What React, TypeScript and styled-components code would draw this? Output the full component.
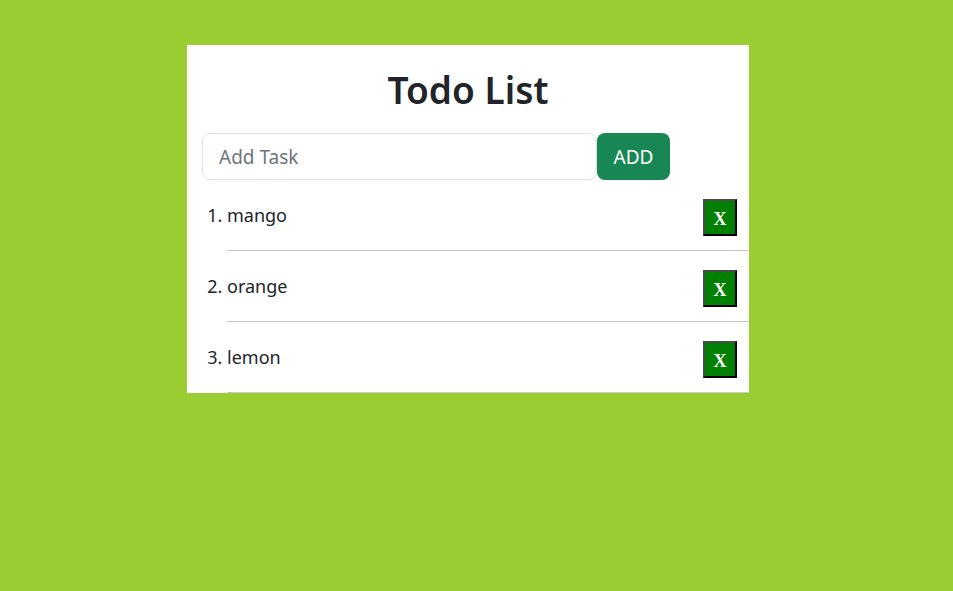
import React, { useState } from "react"
import styled, { createGlobalStyle } from "styled-components"

const GlobalStyle = createGlobalStyle`
  html, body {
    margin: 0;
    padding: 0;
    background: #9acd32;
    font-family: "Noto Sans", "Open Sans", sans-serif;
    color: #212529;
  }
`

const Card = styled.div`
  width: 562px;
  margin: 45px 0 0 187px;
  padding-top: 20px;
  background: #fff;
`

const Title = styled.h1`
  margin: 0 0 18px;
  height: 50px;
  line-height: 50px;
  text-align: center;
  font-size: 37px;
  font-weight: 600;
  color: #212529;
`

const InputRow = styled.div`
  display: flex;
  padding: 0 15px;
`

const TaskInput = styled.input`
  box-sizing: border-box;
  width: 395px;
  height: 47px;
  padding: 1px 16px 0;
  font-family: inherit;
  font-size: 19px;
  color: #212529;
  border: 1px solid #dee2e6;
  border-radius: 8px;
  outline: none;
  &::placeholder {
    color: #6c757d;
  }
`

const AddButton = styled.button`
  box-sizing: border-box;
  width: 73px;
  height: 47px;
  padding-top: 2px;
  font-family: inherit;
  font-size: 19px;
  color: #fff;
  background: #198754;
  border: none;
  border-radius: 8px;
`

const List = styled.ol`
  margin: 0;
  padding-left: 40px;
  font-size: 18px;
`

const Item = styled.li`
  border-bottom: 1px solid #c8c8c8;
  padding: 19px 12px 14px 0;
  line-height: 1.2;
  & > div {
    display: flex;
    justify-content: space-between;
    align-items: center;
  }
`

const TaskName = styled.span`
  margin-bottom: 3px;
`

const RemoveButton = styled.button`
  box-sizing: border-box;
  width: 34px;
  height: 37px;
  padding: 3px 0 0;
  background: #008000;
  color: #fff;
  font-family: "Liberation Serif", serif;
  font-size: 18px;
  font-weight: bold;
  border-style: solid;
  border-width: 2px;
  border-color: #4a4a4a #000 #000 #4a4a4a;
`

export default function App() {
  const [tasks] = useState(["mango", "orange", "lemon"])
  return (
    <>
      <GlobalStyle />
      <Card>
        <Title>Todo List</Title>
        <InputRow>
          <TaskInput placeholder="Add Task" />
          <AddButton>ADD</AddButton>
        </InputRow>
        <List>
          {tasks.map((t) => (
            <Item key={t}>
              <div>
                <TaskName>{t}</TaskName>
                <RemoveButton>X</RemoveButton>
              </div>
            </Item>
          ))}
        </List>
      </Card>
    </>
  )
}
